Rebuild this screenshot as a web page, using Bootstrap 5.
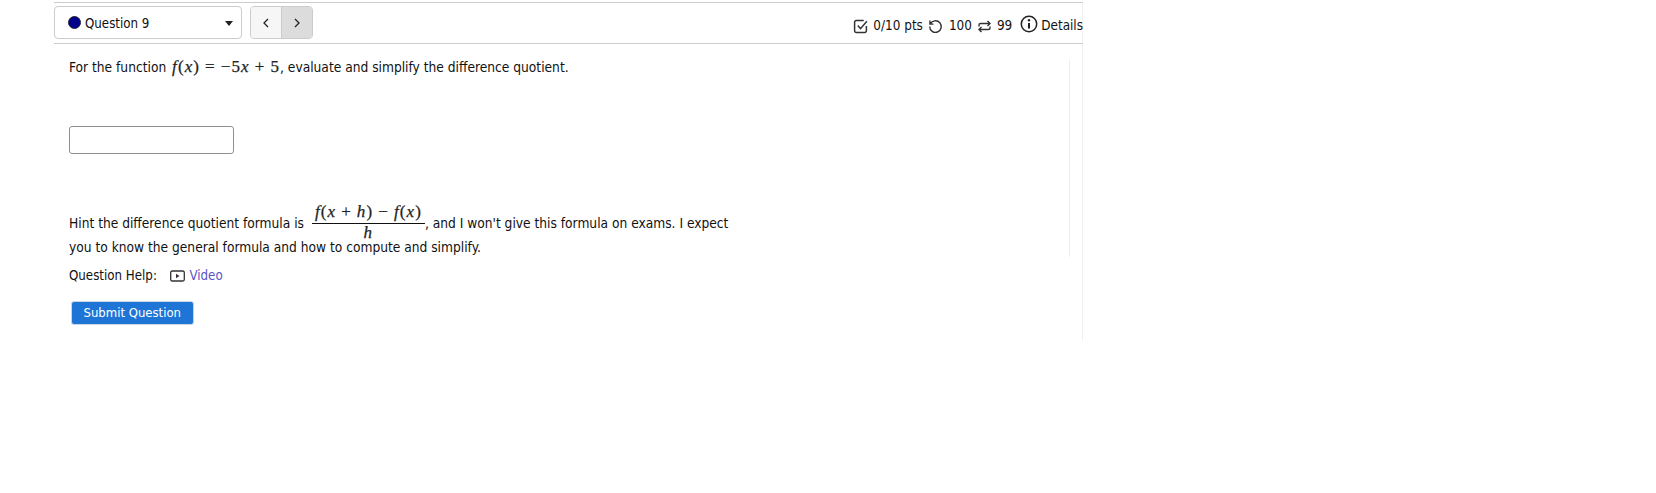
<!DOCTYPE html>
<html lang="en"><head><meta charset="utf-8"><title>Question 9</title>
<link href="https://cdn.jsdelivr.net/npm/bootstrap@5.3.0/dist/css/bootstrap.min.css" rel="stylesheet">
<style>
body{font-family:"DejaVu Sans",sans-serif;font-stretch:condensed;font-size:13.65px;color:#111;background:#fff;line-height:1.5}
.qwrap{width:1029px;margin:2px 0 0 54px;border-right:1px solid #f0f0f0;height:339px}
.qbar{height:42px;border-top:1px solid #ccc;border-bottom:1px solid #ccc;margin-right:-1px;padding:3px 0 0}
.qsel{width:188px;height:33px;border:1px solid #ccc;border-radius:4px;padding:2px 8px 0 13px;font-size:13.2px}
.qdot{width:13px;height:13px;border-radius:50%;background:#00008b;border:1px solid #223;margin-right:4px;margin-top:-2px}
.qcaret{width:0;height:0;border-left:4px solid transparent;border-right:4px solid transparent;border-top:5px solid #222;margin-left:auto}
.qnav{margin-left:8px;height:33px;width:63px;border:1px solid #ccc;border-radius:4px;overflow:hidden}
.qnav>span{width:32px;background:#f6f6f6}
.qnav>span+span{background:#dcdcdc;border-left:1px solid #ccc}
.qstats{margin-left:auto;font-size:13.4px;padding-top:3px;line-height:20px}
.qstats svg{display:block}
.qstats span{white-space:nowrap}
.qg5{margin-left:5px}
.qg6{margin-left:6px}
.qg3{margin-left:3px}
.qbody{position:relative;height:296px;padding:10px 0 0 15px}
.qrule{position:absolute;right:12px;top:15px;height:198px;border-right:1px solid #eee}
.qp{width:660px;margin:0}
.mth{font-family:"Liberation Serif",serif;font-size:17px;color:#222;letter-spacing:1.1px;-webkit-text-stroke:.25px #222}
.mth i{font-style:italic}
.mop{margin:0 5px}
.qfn{margin-left:2px}
.qinput{display:block;width:165px;height:28px;border:1px solid #8f8f8f;border-radius:3px;margin:46px 0 0;background:#fff}
.qhint{margin-top:47px;line-height:24px}
.qfrac{display:inline-flex;flex-direction:column;vertical-align:11px;margin:0 0 -12px 4px;text-align:center;line-height:22px}
.qfrac>span:first-child{padding:0 3px}
.qfrac>span+span{border-top:1px solid #111;line-height:18px}
.qhelp{margin-top:7px;line-height:20px;font-size:13.2px}
.qhelp a{color:#5a52c7;text-decoration:none}
.qhelp svg{margin-left:9px;margin-right:1px}
.qsubmit{margin:15px 0 0 2px;--bs-btn-padding-x:11.500px;--bs-btn-padding-y:0;--bs-btn-font-size:13px;--bs-btn-bg:#1f75d6;--bs-btn-border-color:#c8d6e6;--bs-btn-border-radius:3px;--bs-btn-line-height:22px;display:block;font-stretch:condensed}
</style></head><body>
<div class="qwrap">
 <div class="qbar d-flex">
  <div class="qsel d-flex align-items-center"><span class="qdot"></span>Question 9<span class="qcaret"></span></div>
  <div class="qnav d-flex">
   <span class="d-flex align-items-center justify-content-center"><svg width="8" height="12" viewBox="0 0 8 12"><path d="M6 2 2 6l4 4" fill="none" stroke="#222" stroke-width="1.3"/></svg></span>
   <span class="d-flex align-items-center justify-content-center"><svg width="8" height="12" viewBox="0 0 8 12"><path d="M2 2l4 4-4 4" fill="none" stroke="#222" stroke-width="1.3"/></svg></span>
  </div>
  <div class="qstats d-flex align-items-center">
   <svg width="15" height="15" viewBox="0 0 14 14"><path d="M12.500 6.500V11a1.500 1.500 0 0 1-1.500 1.500H3A1.500 1.500 0 0 1 1.500 11V3A1.500 1.500 0 0 1 3 1.500h7M4.500 6l2.500 3 6-7" fill="none" stroke="#333" stroke-width="1.400"/></svg>
   <span class="qg5">0/10 pts</span>
   <svg class="qg5" width="15" height="15" viewBox="0 0 14 14"><path d="M2.200 4.600A5.400 5.400 0 1 1 1.600 7M1.800 1.500v3.300h3.300" fill="none" stroke="#333" stroke-width="1.300"/></svg>
   <span class="qg6">100</span>
   <svg class="qg5" width="15" height="15" viewBox="0 0 15 14"><path d="M2 7V5.500A1.500 1.500 0 0 1 3.500 4H13M10.500 1.500 13 4l-2.500 2.500M13 7v1.500A1.500 1.500 0 0 1 11.500 10H2M4.500 7.500 2 10l2.500 2.500" fill="none" stroke="#333" stroke-width="1.400"/></svg>
   <span class="qg5">99</span>
   <svg class="ms-2 mb-1" width="18" height="18" viewBox="0 0 18 18"><circle cx="9" cy="9" r="7.700" fill="none" stroke="#222" stroke-width="1.500"/><path d="M9 8v5.500" stroke="#222" stroke-width="2"/><circle cx="9" cy="5.300" r="1.200" fill="#222"/></svg>
   <span class="qg3">Details</span>
  </div>
 </div>
 <div class="qbody">
  <div class="qrule"></div>
  <p class="qp">For the function <span class="mth qfn"><i>f</i>(<i>x</i>)<span class="mop">=</span>&minus;5<i>x</i><span class="mop">+</span>5</span>, evaluate and simplify the difference quotient.</p>
  <input class="qinput" type="text" aria-label="Answer">
  <p class="qp qhint">Hint the difference quotient formula is <span class="qfrac mth"><span><i>f</i>(<i>x</i><span class="mop">+</span><i>h</i>)<span class="mop">&minus;</span><i>f</i>(<i>x</i>)</span><span><i>h</i></span></span>, and I won't give this formula on exams. I expect you to know the general formula and how to compute and simplify.</p>
  <div class="qhelp">Question Help: <svg width="15" height="12" viewBox="0 0 15 12" class="align-middle"><rect x=".7" y="1" width="13.600" height="10" rx="1.500" fill="none" stroke="#333" stroke-width="1.300"/><path d="M6 3.800v4.400L9.500 6z" fill="#333"/></svg> <a href="#">Video</a></div>
  <button type="button" class="btn btn-primary qsubmit">Submit Question</button>
 </div>
</div>
</body></html>
